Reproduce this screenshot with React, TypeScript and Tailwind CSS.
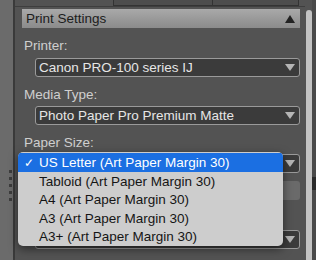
import React from "react";

const font = { fontFamily: '"Liberation Sans", Arial, sans-serif' };

function Select({ value }: { value: string }) {
  return (
    <div className="ml-[20px] mr-[5px] h-[19px] flex items-center justify-between rounded-[3px] border border-[#9a9a9a] bg-[#3b3b3b] pl-[3px] pr-[3px]">
      <span className="text-[13.5px] leading-none text-[#e6e6e6] whitespace-nowrap">{value}</span>
      <svg width="10" height="7" viewBox="0 0 10 7" className="mr-[1px]">
        <path d="M0 0 L10 0 L5 7 Z" fill="#b5b5b5" />
      </svg>
    </div>
  );
}

function Label({ text, className }: { text: string; className: string }) {
  return <div className={`pl-[9px] h-[16px] text-[13.5px] leading-[16px] text-[#cfcfcf] ${className}`}>{text}</div>;
}

const sizes = [
  "US Letter (Art Paper Margin 30)",
  "Tabloid (Art Paper Margin 30)",
  "A4 (Art Paper Margin 30)",
  "A3 (Art Paper Margin 30)",
  "A3+ (Art Paper Margin 30)",
];

export default function App() {
  return (
    <div className="relative w-[316px] h-[260px] flex overflow-hidden bg-[#535353]" style={font}>
      {/* left dock strip */}
      <div className="w-[13px] bg-[#6b6b6b] flex flex-col items-end pr-[1px] pt-[170px] gap-[4px]">
        {[0, 1, 2, 3, 4].map((i) => (
          <div key={i} className="w-[3px] h-[3px] bg-[#3c3c3c]" />
        ))}
      </div>
      <div className="w-[2px] bg-[#3a3a3a]" />

      {/* panel */}
      <div className="flex-1 flex flex-col">
        <div className="h-[7px] flex border-b border-[#3e3e3e]">
          <div className="ml-[98px] w-[100px] border-x border-b border-[#333] bg-[#4d4d4d]" />
          <div className="w-[86px] border-r border-b border-[#333] bg-[#4d4d4d]" />
        </div>

        <div className="mt-[2px] ml-[7px] mr-[5px] h-[19px] flex items-center justify-between bg-gradient-to-b from-[#a9a9a9] to-[#8b8b8b] pl-[4px] pr-[5px]">
          <span className="text-[13.5px] leading-none text-[#1c1c1c]">Print Settings</span>
          <svg width="10" height="8" viewBox="0 0 10 8">
            <path d="M0 8 L10 8 L5 0 Z" fill="#222" />
          </svg>
        </div>

        <Label text="Printer:" className="mt-[10px]" />
        <div className="mt-[4px]">
          <Select value="Canon PRO-100 series IJ" />
        </div>

        <Label text="Media Type:" className="mt-[10px]" />
        <div className="mt-[3px]">
          <Select value="Photo Paper Pro Premium Matte" />
        </div>

        <Label text="Paper Size:" className="mt-[10px]" />
        <div className="mt-[3px]">
          <Select value="US Letter (Art Paper Margin 30)" />
        </div>

        <div className="mt-[8px] ml-[20px] mr-[5px] h-[19px] rounded-[3px] bg-[#6a6a6a]" />

        <div className="mt-[30px]">
          <Select value="" />
        </div>
      </div>

      {/* scrollbar */}
      <div className="w-[11px] flex">
        <div className="w-[6px] ml-[1px] mt-[10px] h-[250px] rounded-t-[3px] bg-[#c3c3c3]" />
        <div className="flex-1 bg-[#4a4a4a] flex flex-col">
          <div className="mt-[177px] h-[13px] bg-[#2a2a2a]" />
        </div>
      </div>

      {/* open dropdown menu */}
      <div className="absolute left-[18px] top-[152px] w-[265px] h-[94px] rounded-[5px] bg-[#cdcdcd] shadow-[0_3px_10px_rgba(0,0,0,0.5)] pt-[1px] overflow-hidden">
        {sizes.map((s, i) => (
          <div
            key={s}
            className={`flex items-center text-[13.5px] leading-none whitespace-nowrap ${
              i === 0 ? "h-[19px] bg-[#1b6fe2] text-white" : "h-[18.5px] text-[#151515]"
            }`}
          >
            <span className="w-[21px] pl-[6px] text-[12px]">{i === 0 ? "✓" : ""}</span>
            {s}
          </div>
        ))}
      </div>
    </div>
  );
}
